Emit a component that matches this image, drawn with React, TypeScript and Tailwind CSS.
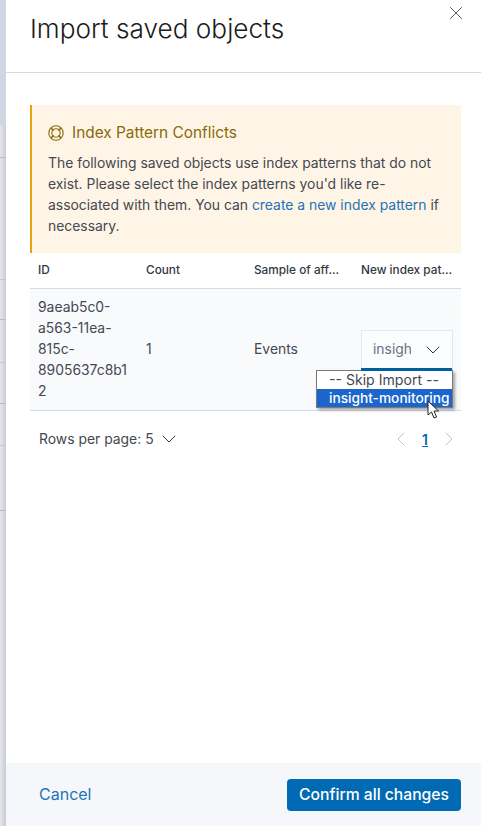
import { ChevronDown, ChevronLeft, ChevronRight, X } from "lucide-react";

const App = () => {
  return (
    <div className="flex h-[826px] w-[481px] overflow-hidden bg-[#d9dce3] font-['Inter',sans-serif] text-[#454851]">
      {/* page behind the flyout */}
      <div className="flex w-[6px] flex-none flex-col bg-gradient-to-r from-[#e4e6eb] to-[#c9ccd4]">
        <div className="h-[125px] bg-[#cfd6e2]" />
        <div className="h-[33px] border-b border-[#b9bcc4]" />
        <div className="h-[122px] border-b border-[#c5c8cf]" />
        <div className="h-[40px] border-b border-[#b9bcc4]" />
        <div className="h-[43px] border-b border-[#c5c8cf]" />
        <div className="h-[41px] border-b border-[#b9bcc4]" />
        <div className="h-[42px] border-b border-[#c5c8cf]" />
        <div className="h-[65px] border-b border-[#b9bcc4]" />
      </div>

      <div className="relative flex min-w-0 flex-1 flex-col bg-white">
        <button className="absolute top-[2px] right-[14px] text-[#343741]">
          <X size={22} strokeWidth={0.9} />
        </button>

        <div className="h-[73px] flex-none border-b border-[#d3dae6] pt-[11px] pl-[24px]">
          <h1 className="text-[26.2px] leading-[36px] font-light text-[#1a1c21]">Import saved objects</h1>
        </div>

        <div className="min-h-0 flex-1 pt-[32px] pr-[20px] pl-[24px]">
          <div className="h-[148px] border-l-2 border-[#e6a50f] bg-[#fef5e6] pt-[16px] pl-[16px]">
            <div className="flex items-center gap-[8px] text-[#8a6a0a]">
              <svg width="16" height="16" viewBox="0 0 16 16" fill="none" stroke="currentColor" strokeWidth="1.1">
                <circle cx="8" cy="8" r="7.2" />
                <circle cx="8" cy="8" r="4.2" />
                <path d="M3 3l2.6 2.6M13 3l-2.6 2.6M3 13l2.6-2.6M13 13l-2.6-2.6" strokeWidth="1.6" />
              </svg>
              <span className="text-[15.4px] leading-[24px]">Index Pattern Conflicts</span>
            </div>
            <p className="mt-[8px] w-[404px] text-[13.9px] leading-[21px]">
              The following saved objects use index patterns that do not exist. Please select the index patterns
              you'd like re-associated with them. You can <span className="text-[#1f74b5]">create a new index pattern</span> if
              necessary.
            </p>
          </div>

          <div className="grid h-[36px] grid-cols-[108px_108px_107px_1fr] items-center border-b border-[#d3dae6] pl-[8px] text-[11.8px] font-medium text-[#343741]">
            <span>ID</span>
            <span>Count</span>
            <span>Sample of aff...</span>
            <span>New index pat...</span>
          </div>

          <div className="relative grid h-[122px] grid-cols-[108px_108px_107px_1fr] items-center border-b border-[#d3dae6] bg-[#f9fafc] pl-[8px] text-[13.9px] leading-[21px]">
            <span className="w-[92px] break-all">
              9aeab5c0-
              <br />
              a563-11ea-
              <br />
              815c-
              <br />
              8905637c8b1
              <br />2
            </span>
            <span>1</span>
            <span>Events</span>
            <div className="flex h-[40px] w-[92px] items-center justify-between border border-[#e4e7ee] bg-[#fbfcfd] pr-[7px] pl-[11px]">
              <span className="w-[38px] overflow-hidden text-[#69707d]">insight</span>
              <ChevronDown size={24} strokeWidth={1} className="text-[#343741]" />
            </div>

            <div className="absolute top-[81px] left-[286px] z-10 w-[137px] border border-[#7a7a7a] bg-white text-[13.7px] leading-[18px] shadow-[2px_2px_3px_rgba(0,0,0,0.35)]">
              <div className="absolute -top-[3px] right-0 left-[44px] -z-10 h-[3px] bg-[#00609f]" />
              <div className="pl-[12px] text-[14.1px]">-- Skip Import --</div>
              <div className="bg-[#1a66cc] pl-[12px] font-medium whitespace-nowrap text-white">insight-monitoring</div>
            </div>
            <svg className="absolute top-[111px] left-[397px] z-20" width="13" height="20" viewBox="0 0 13 20">
              <path d="M1 1 L1 15 L4.5 12 L7 18 L9.5 17 L7 11 L11.5 11 Z" fill="#fff" stroke="#222" strokeWidth="1" />
            </svg>
          </div>

          <div className="flex h-[56px] items-center justify-between pr-[0px] pl-[9px] text-[13.9px]">
            <div className="flex items-center gap-[3px]">
              <span>Rows per page: 5</span>
              <ChevronDown size={24} strokeWidth={1} className="text-[#343741]" />
            </div>
            <div className="flex items-center gap-[9px]">
              <ChevronLeft size={24} strokeWidth={1} className="text-[#c2c3c6]" />
              <span className="text-[14px] font-semibold text-[#006bb4] underline">1</span>
              <ChevronRight size={24} strokeWidth={1} className="text-[#c2c3c6]" />
            </div>
          </div>
        </div>

        <div className="flex h-[63px] flex-none items-center justify-between bg-[#f5f7fa] pr-[20px] pl-[33px]">
          <a className="-mt-[2px] text-[16px] text-[#1f74b5]">Cancel</a>
          <button className="-mt-[1px] h-[32px] w-[174px] translate-y-[1px] rounded-[4px] bg-[#006bb4] text-[15.7px] font-medium text-white">
            Confirm all changes
          </button>
        </div>
      </div>
    </div>
  );
};

export default App;
